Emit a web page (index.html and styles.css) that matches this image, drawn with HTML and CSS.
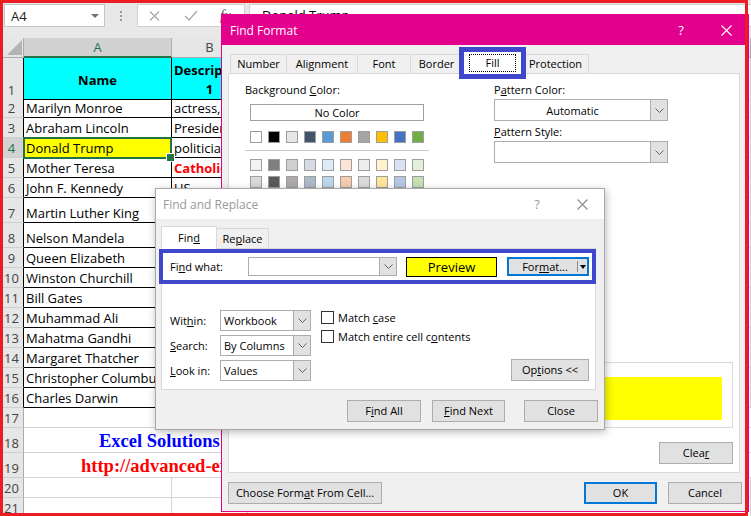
FILE: index.html
```html
<!DOCTYPE html>
<html>
<head>
<meta charset="utf-8">
<title>Find Format</title>
<link rel="stylesheet" href="styles.css">
</head>
<body>
<div class="screen">
  <div class="excel">
    <div class="toolbar">
      <div class="namebox"><span class="nb-text">A4</span><span class="nb-caret"></span></div>
      <div class="grip"><i></i><i></i><i></i></div>
      <div class="fxbox">
        <svg class="fx-x" width="11" height="10" viewBox="0 0 11 10"><path d="M1 0.5L10 9.5M10 0.5L1 9.5" stroke="#A8A8A8" stroke-width="1.3" fill="none"/></svg>
        <svg class="fx-ok" width="14" height="11" viewBox="0 0 14 11"><path d="M1 6L5 10L13 1" stroke="#A8A8A8" stroke-width="1.3" fill="none"/></svg>
        <span class="fx-f">fx</span>
      </div>
      <div class="formula">Donald Trump</div>
    </div>

    <div class="sheet">
      <div class="row r-hdr">
        <div class="corner"><svg width="15" height="15" viewBox="0 0 15 15"><path d="M15 0V15H0Z" fill="#B4B4B4"/></svg></div>
        <div class="colhdr sel">A</div>
        <div class="colhdr">B</div>
        <div class="colhdr">C</div>
      </div>
      <div class="row h40 boxed">
        <div class="rh">1</div>
        <div class="cell a hd">Name</div>
        <div class="cell b hd hd2"><span>Description<br>1</span></div>
        <div class="cell"></div>
      </div>
      <div class="row boxed"><div class="rh">2</div><div class="cell a">Marilyn Monroe</div><div class="cell b">actress, model</div><div class="cell"></div></div>
      <div class="row boxed"><div class="rh">3</div><div class="cell a">Abraham Lincoln</div><div class="cell b">President</div><div class="cell"></div></div>
      <div class="row boxed"><div class="rh cur">4</div><div class="cell a selcell">Donald Trump</div><div class="cell b">politician</div><div class="cell"></div></div>
      <div class="row boxed"><div class="rh">5</div><div class="cell a">Mother Teresa</div><div class="cell b red">Catholic</div><div class="cell"></div></div>
      <div class="row boxed"><div class="rh">6</div><div class="cell a">John F. Kennedy</div><div class="cell b">US</div><div class="cell"></div></div>
      <div class="row h25 boxed"><div class="rh">7</div><div class="cell a">Martin Luther King</div><div class="cell b"></div><div class="cell"></div></div>
      <div class="row h25 boxed"><div class="rh">8</div><div class="cell a">Nelson Mandela</div><div class="cell b"></div><div class="cell"></div></div>
      <div class="row boxed"><div class="rh">9</div><div class="cell a">Queen Elizabeth</div><div class="cell b"></div><div class="cell"></div></div>
      <div class="row boxed"><div class="rh">10</div><div class="cell a">Winston Churchill</div><div class="cell b"></div><div class="cell"></div></div>
      <div class="row boxed"><div class="rh">11</div><div class="cell a">Bill Gates</div><div class="cell b"></div><div class="cell"></div></div>
      <div class="row boxed"><div class="rh">12</div><div class="cell a">Muhammad Ali</div><div class="cell b"></div><div class="cell"></div></div>
      <div class="row boxed"><div class="rh">13</div><div class="cell a">Mahatma Gandhi</div><div class="cell b"></div><div class="cell"></div></div>
      <div class="row boxed"><div class="rh">14</div><div class="cell a">Margaret Thatcher</div><div class="cell b"></div><div class="cell"></div></div>
      <div class="row boxed"><div class="rh">15</div><div class="cell a">Christopher Columbus</div><div class="cell b"></div><div class="cell"></div></div>
      <div class="row boxed"><div class="rh">16</div><div class="cell a">Charles Darwin</div><div class="cell b"></div><div class="cell"></div></div>
      <div class="row"><div class="rh">17</div><div class="cell m"></div></div>
      <div class="row h25"><div class="rh">18</div><div class="cell m brand">Excel Solutions</div></div>
      <div class="row h25"><div class="rh">19</div><div class="cell m url">http://advanced-excel-solutions.blogspot.com</div></div>
      <div class="row"><div class="rh">20</div><div class="cell"></div><div class="cell"></div><div class="cell"></div></div>
      <div class="row"><div class="rh">21</div><div class="cell"></div><div class="cell"></div><div class="cell"></div></div>
    </div>
  </div>

  <!-- Find Format dialog -->
  <div class="dlg ff">
    <div class="ff-title">
      <span class="tt">Find Format</span>
      <span class="tb tb-q">?</span>
      <span class="tb tb-x"><svg width="11" height="11" viewBox="0 0 11 11"><path d="M0.5 0.5L10.5 10.5M10.5 0.5L0.5 10.5" stroke="#fff" stroke-width="1.1" fill="none"/></svg></span>
    </div>
    <div class="ff-body">
      <div class="tabs ff-tabs">
        <div class="tab">Number</div>
        <div class="tab">Alignment</div>
        <div class="tab">Font</div>
        <div class="tab">Border</div>
        <div class="tab active marked"><span class="focus">Fill</span></div>
        <div class="tab">Protection</div>
      </div>
      <div class="ff-panel">
        <div class="fill-grid">
          <div class="bgcol">
            <div class="lbl">Background <u>C</u>olor:</div>
            <div class="nocolor">No Color</div>
            <div class="sw-row t1"><i class="sw"></i><i class="sw"></i><i class="sw"></i><i class="sw"></i><i class="sw"></i><i class="sw"></i><i class="sw"></i><i class="sw"></i><i class="sw"></i><i class="sw"></i></div>
            <div class="sep"></div>
            <div class="sw-row t2"><i class="sw"></i><i class="sw"></i><i class="sw"></i><i class="sw"></i><i class="sw"></i><i class="sw"></i><i class="sw"></i><i class="sw"></i><i class="sw"></i><i class="sw"></i></div>
            <div class="sw-row t3"><i class="sw"></i><i class="sw"></i><i class="sw"></i><i class="sw"></i><i class="sw"></i><i class="sw"></i><i class="sw"></i><i class="sw"></i><i class="sw"></i><i class="sw"></i></div>
          </div>
          <div class="patcol">
            <div class="lbl">P<u>a</u>ttern Color:</div>
            <div class="combo pat"><span class="cv cv-center">Automatic</span><span class="dd"><svg width="9" height="5" viewBox="0 0 9 5"><path d="M0.5 0.5L4.5 4.5L8.5 0.5" stroke="#606060" fill="none"/></svg></span></div>
            <div class="lbl lbl2"><u>P</u>attern Style:</div>
            <div class="combo pat"><span class="cv"></span><span class="dd"><svg width="9" height="5" viewBox="0 0 9 5"><path d="M0.5 0.5L4.5 4.5L8.5 0.5" stroke="#606060" fill="none"/></svg></span></div>
          </div>
        </div>
        <div class="sample"><div class="sample-fill"></div></div>
        <div class="clear-row"><div class="btn btn-clear">Clea<u>r</u></div></div>
      </div>
      <div class="ff-foot">
        <div class="btn btn-choose">Choose Form<u>a</u>t From Cell...</div>
        <div class="btn btn-ok">OK</div>
        <div class="btn btn-cancel">Cancel</div>
      </div>
    </div>
  </div>

  <!-- Find and Replace dialog -->
  <div class="dlg fr">
    <div class="fr-title">
      <span class="tt">Find and Replace</span>
      <span class="tb tb-q">?</span>
      <span class="tb tb-x"><svg width="11" height="11" viewBox="0 0 11 11"><path d="M0.5 0.5L10.5 10.5M10.5 0.5L0.5 10.5" stroke="#8C8C8C" stroke-width="1.1" fill="none"/></svg></span>
    </div>
    <div class="fr-body">
      <div class="tabs fr-tabs">
        <div class="tab active">Fin<u>d</u></div>
        <div class="tab">Re<u>p</u>lace</div>
      </div>
      <div class="fr-panel">
        <div class="findrow">
          <span class="fw-lbl">Fi<u>n</u>d what:</span>
          <div class="combo fw-combo"><span class="cv"></span><span class="dd"><svg width="9" height="5" viewBox="0 0 9 5"><path d="M0.5 0.5L4.5 4.5L8.5 0.5" stroke="#606060" fill="none"/></svg></span></div>
          <div class="preview">Preview</div>
          <div class="fmt"><span class="fmt-main">For<u>m</u>at...</span><span class="fmt-split"></span><span class="fmt-arrow"></span></div>
        </div>
        <div class="fr-opts">
          <div class="fields">
            <span class="f-lbl">Wit<u>h</u>in:</span>
            <div class="combo"><span class="cv">Workbook</span><span class="dd"><svg width="9" height="5" viewBox="0 0 9 5"><path d="M0.5 0.5L4.5 4.5L8.5 0.5" stroke="#606060" fill="none"/></svg></span></div>
            <span class="f-lbl"><u>S</u>earch:</span>
            <div class="combo"><span class="cv">By Columns</span><span class="dd"><svg width="9" height="5" viewBox="0 0 9 5"><path d="M0.5 0.5L4.5 4.5L8.5 0.5" stroke="#606060" fill="none"/></svg></span></div>
            <span class="f-lbl"><u>L</u>ook in:</span>
            <div class="combo"><span class="cv">Values</span><span class="dd"><svg width="9" height="5" viewBox="0 0 9 5"><path d="M0.5 0.5L4.5 4.5L8.5 0.5" stroke="#606060" fill="none"/></svg></span></div>
          </div>
          <div class="checks">
            <div class="chk"><span class="box"></span><span>Match <u>c</u>ase</span></div>
            <div class="chk"><span class="box"></span><span>Match entire cell c<u>o</u>ntents</span></div>
            <div class="btn btn-opt">Op<u>t</u>ions &lt;&lt;</div>
          </div>
        </div>
      </div>
      <div class="fr-foot">
        <div class="btn btn-findall">F<u>i</u>nd All</div>
        <div class="btn btn-findnext"><u>F</u>ind Next</div>
        <div class="btn btn-close">Close</div>
      </div>
    </div>
  </div>

  <div class="frame"></div>
</div>
</body>
</html>
```

FILE: styles.css
```css
* { box-sizing: border-box; }
html, body { margin: 0; padding: 0; }
body { font-family: "Open Sans", "Noto Sans", sans-serif; background: #fff; }

.screen { position: relative; width: 751px; height: 516px; overflow: hidden; background: #fff; }
.excel { width: 751px; height: 516px; }

/* ---------- formula bar ---------- */
.toolbar { height: 38px; background: #E8E8E8; display: flex; align-items: flex-start; padding: 4px 0 0 4px; }
.namebox { width: 101px; height: 23px; background: #fff; border: 1px solid #C6C6C6; display: flex; align-items: center; padding-left: 6px; font-size: 13px; color: #222; }
.nb-text { flex: 1; }
.nb-caret { width: 0; height: 0; border-left: 4px solid transparent; border-right: 4px solid transparent; border-top: 4px solid #707070; margin-right: 5px; }
.grip { margin: 7px 0 0 15px; display: flex; flex-direction: column; gap: 2px; }
.grip i { display: block; width: 2px; height: 2px; background: #9A9A9A; }
.fxbox { margin-left: 15px; width: 108px; height: 23px; background: #fff; border: 1px solid #D0D0D0; display: flex; align-items: center; }
.fx-x { margin-left: 11px; }
.fx-ok { margin-left: 24px; }
.fx-f { margin-left: 22px; font-family: "Liberation Serif", serif; font-style: italic; font-size: 15px; color: #555; }
.formula { margin-left: 4px; flex: 1; height: 23px; background: #fff; border: 1px solid #D0D0D0; border-right: none; padding-left: 12px; font-size: 13px; line-height: 21px; color: #000; }

/* ---------- sheet ---------- */
.row { display: grid; grid-template-columns: 24px 148px 76px 1fr; height: 20px; }
.h25 { height: 25px; }
.h40 { height: 40px; }

.corner { background: #E6E6E6; border-right: 1px solid #ABABAB; border-bottom: 1px solid #ABABAB; display: flex; justify-content: flex-end; align-items: flex-end; padding: 0 1px 2px 0; }
.colhdr { background: #E6E6E6; border-right: 1px solid #ABABAB; border-bottom: 1px solid #ABABAB; text-align: center; font-size: 13px; line-height: 19px; color: #444; }
.colhdr.sel { background: #D2D2D2; border-bottom: 2px solid #217346; color: #217346; line-height: 18px; }

.rh { background: #E6E6E6; border-right: 1px solid #ABABAB; border-bottom: 1px solid #CFCFCF; color: #444; font-size: 13px; line-height: 18px; display: flex; align-items: flex-end; justify-content: center; }
.rh.cur { background: #D2D2D2; color: #217346; }
.boxed .rh { border-right-color: #000; }

.cell { border-right: 1px solid #D4D4D4; border-bottom: 1px solid #D4D4D4; font-size: 13px; line-height: 18px; display: flex; align-items: flex-end; padding: 0 2px; white-space: nowrap; color: #000; }
.boxed .cell.a, .boxed .cell.b { border-color: #000; }
.cell.red { color: #FF0000; font-weight: 700; }

.hd { background: #00FFFF; font-weight: 700; justify-content: center; align-items: center; padding-top: 3px; }
.hd2 { justify-content: flex-start; white-space: normal; }
.hd2 span { display: block; width: 100%; text-align: center; line-height: 19px; white-space: nowrap; }

.selcell { position: relative; background: #FFFF00; }
.selcell::after { content: ""; position: absolute; left: -1px; top: -1px; right: -1px; bottom: -2px; border: 2px solid #217346; z-index: 2; }
.selcell::before { content: ""; position: absolute; right: -4px; bottom: -5px; width: 7px; height: 7px; background: #217346; border: 1px solid #fff; z-index: 3; }

.m { grid-column: 2 / 5; border-right: none; }
.brand, .url { font-family: "Liberation Serif", "Times New Roman", serif; font-weight: 700; font-size: 18.5px; line-height: 22px; }
.brand { color: #0000FF; padding-left: 75px; }
.url { color: #FF0000; padding-left: 57px; }

/* ---------- dialogs common ---------- */
.dlg { position: absolute; font-size: 11px; color: #000; }
.tt { flex: 1; font-size: 12px; }
.tb { height: 100%; display: flex; align-items: center; justify-content: center; font-size: 13px; }
.tb-q { width: 46px; }
.tb-x { width: 44px; }

.tabs { display: flex; align-items: flex-end; }
.tab { height: 19px; background: #F0F0F0; border: 1px solid #D9D9D9; border-bottom: none; margin-left: -1px; display: flex; align-items: center; justify-content: center; line-height: 16px; }
.tab:first-child { margin-left: 0; }
.tab.active { background: #fff; position: relative; z-index: 1; margin-bottom: -1px; }

.btn { height: 22px; background: #E1E1E1; border: 1px solid #ADADAD; display: flex; align-items: center; justify-content: center; font-size: 11px; line-height: 16px; }

.combo { display: flex; background: #fff; border: 1px solid #ADADAD; }
.cv { flex: 1; display: flex; align-items: center; padding-left: 3px; white-space: nowrap; }
.cv-center { justify-content: center; padding-left: 0; }
.dd { width: 17px; background: #E1E1E1; border-left: 1px solid #ADADAD; display: flex; align-items: center; justify-content: center; }

/* ---------- Find Format ---------- */
.ff { left: 221px; top: 14px; width: 528px; height: 498px; background: #F0F0F0; border: 1px solid #E3008C; display: flex; flex-direction: column; }
.ff-title { height: 30px; flex: none; background: #E3008C; color: #fff; display: flex; align-items: center; }
.ff-title .tt { padding-left: 8px; }
.ff-body { flex: 1; display: flex; flex-direction: column; padding: 6px 8px 0 6px; }
.ff-tabs { height: 22px; padding-left: 2px; }
.ff-tabs .tab:nth-child(1) { width: 57px; }
.ff-tabs .tab:nth-child(2) { width: 72px; }
.ff-tabs .tab:nth-child(3) { width: 54px; }
.ff-tabs .tab:nth-child(4) { width: 53px; }
.ff-tabs .tab:nth-child(5) { width: 61px; height: 23px; align-items: flex-start; }
.ff-tabs .tab:nth-child(6) { width: 67px; }
.focus { display: block; margin: 2px 6px 0 6px; height: 18px; flex: 1; border: 1px dotted #000; text-align: center; line-height: 16px; }
.marked::after { content: ""; position: absolute; left: -4px; top: -5px; right: -4px; bottom: -5px; border: 5px solid #3F48CC; }

.ff-panel { height: 400px; flex: none; background: #fff; border: 1px solid #D9D9D9; display: flex; flex-direction: column; padding: 8px 6px 8px 16px; }
.fill-grid { display: grid; grid-template-columns: 184px 174px; column-gap: 65px; align-items: start; }
.lbl { height: 16px; line-height: 16px; }
.lbl2 { margin-top: 3px; }
.nocolor { margin: 6px 0 0 5px; width: 174px; height: 17px; border: 1px solid #A0A0A0; background: #fff; text-align: center; line-height: 15px; }
.sw-row { display: flex; gap: 6px; margin-left: 5px; }
.sw-row.t1 { margin-top: 10px; }
.sw-row.t2 { margin-top: 8px; }
.sw-row.t3 { margin-top: 5px; }
.sw { display: block; width: 12px; height: 12px; border: 1px solid #9E9E9E; }
.sep { margin-top: 7px; height: 1px; background: #C8C8C8; }

.t1 .sw:nth-child(1) { background: #FFFFFF; }
.t1 .sw:nth-child(2) { background: #000000; }
.t1 .sw:nth-child(3) { background: #E7E6E6; }
.t1 .sw:nth-child(4) { background: #44546A; }
.t1 .sw:nth-child(5) { background: #5B9BD5; }
.t1 .sw:nth-child(6) { background: #ED7D31; }
.t1 .sw:nth-child(7) { background: #A5A5A5; }
.t1 .sw:nth-child(8) { background: #FFC000; }
.t1 .sw:nth-child(9) { background: #4472C4; }
.t1 .sw:nth-child(10) { background: #70AD47; }
.t2 .sw:nth-child(1) { background: #F2F2F2; }
.t2 .sw:nth-child(2) { background: #7F7F7F; }
.t2 .sw:nth-child(3) { background: #D0CECE; }
.t2 .sw:nth-child(4) { background: #D6DCE4; }
.t2 .sw:nth-child(5) { background: #DDEBF7; }
.t2 .sw:nth-child(6) { background: #FCE4D6; }
.t2 .sw:nth-child(7) { background: #EDEDED; }
.t2 .sw:nth-child(8) { background: #FFF2CC; }
.t2 .sw:nth-child(9) { background: #D9E1F2; }
.t2 .sw:nth-child(10) { background: #E2EFDA; }
.t3 .sw:nth-child(1) { background: #D9D9D9; }
.t3 .sw:nth-child(2) { background: #595959; }
.t3 .sw:nth-child(3) { background: #AEAAAA; }
.t3 .sw:nth-child(4) { background: #ACB9CA; }
.t3 .sw:nth-child(5) { background: #BDD7EE; }
.t3 .sw:nth-child(6) { background: #F8CBAD; }
.t3 .sw:nth-child(7) { background: #DBDBDB; }
.t3 .sw:nth-child(8) { background: #FFE699; }
.t3 .sw:nth-child(9) { background: #B4C6E7; }
.t3 .sw:nth-child(10) { background: #C6E0B4; }

.combo.pat { height: 22px; margin-top: 1px; }

.sample { margin-top: auto; height: 66px; border: 1px solid #D9D9D9; padding: 14px 10px 7px 11px; }
.sample-fill { height: 100%; background: #FFFF00; }
.clear-row { margin-top: 14px; display: flex; justify-content: flex-end; }
.btn-clear { width: 74px; }

.ff-foot { margin: 9px -2px 0 0; display: flex; }
.btn-choose { width: 154px; }
.btn-ok { width: 73px; margin-left: auto; border: 2px solid #0078D7; }
.btn-cancel { width: 74px; margin-left: 11px; }

/* ---------- Find and Replace ---------- */
.fr { left: 155px; top: 188px; width: 450px; height: 242px; background: #F0F0F0; border: 1px solid #A8A8A8; box-shadow: 1px 2px 8px rgba(0,0,0,0.28); display: flex; flex-direction: column; z-index: 5; }
.fr-title { height: 30px; flex: none; background: #fff; color: #9A9A9A; display: flex; align-items: center; }
.fr-title .tt { padding-left: 7px; }
.fr-body { flex: 1; display: flex; flex-direction: column; padding: 7px 8px 0 5px; }
.fr-tabs { height: 22px; }
.fr-tabs .tab { width: 53px; height: 20px; }
.fr-tabs .tab.active { width: 56px; height: 23px; }
.fr-panel { height: 142px; flex: none; background: #fff; border: 1px solid #D9D9D9; }
.findrow { height: 35px; margin: 0 -1px 0 -3px; border: 4px solid #3F48CC; display: flex; align-items: center; padding-left: 7px; }
.fw-lbl { width: 78px; }
.fw-combo { width: 149px; height: 19px; }
.preview { margin-left: 9px; width: 91px; height: 20px; background: #FFFF00; border: 1px solid #000; text-align: center; font-size: 13px; line-height: 18px; }
.fmt { margin-left: 10px; width: 82px; height: 19px; border: 2px solid #0078D7; background: #E1E1E1; display: flex; align-items: center; }
.fmt-main { flex: 1; text-align: center; padding-left: 4px; line-height: 15px; }
.fmt-split { width: 1px; height: 11px; background: #8A8A8A; }
.fmt-arrow { width: 9px; display: flex; justify-content: center; }
.fmt-arrow::before { content: ""; width: 0; height: 0; border-left: 3px solid transparent; border-right: 3px solid transparent; border-top: 4px solid #000; }

.fr-opts { margin-top: 26px; padding: 0 6px 0 8px; display: flex; }
.fields { display: grid; grid-template-columns: 50px 91px; grid-auto-rows: 21px; row-gap: 4px; align-items: center; }
.fields .combo { height: 21px; }
.checks { flex: 1; margin-left: 10px; padding-top: 1px; display: flex; flex-direction: column; }
.chk { height: 13px; display: flex; align-items: center; gap: 4px; margin-bottom: 6px; white-space: nowrap; }
.box { width: 13px; height: 13px; border: 1px solid #333; background: #fff; flex: none; }
.btn-opt { width: 78px; margin-top: auto; align-self: flex-end; }

.fr-foot { margin: 10px -2px 0 0; display: flex; justify-content: flex-end; }
.btn-findall { width: 74px; }
.btn-findnext { width: 73px; margin-left: 11px; }
.btn-close { width: 74px; margin-left: 19px; }

/* ---------- annotation frame ---------- */
.frame { position: absolute; left: 0; top: 0; width: 748px; height: 516px; border: 3px solid #ED1C24; pointer-events: none; z-index: 10; }
```
